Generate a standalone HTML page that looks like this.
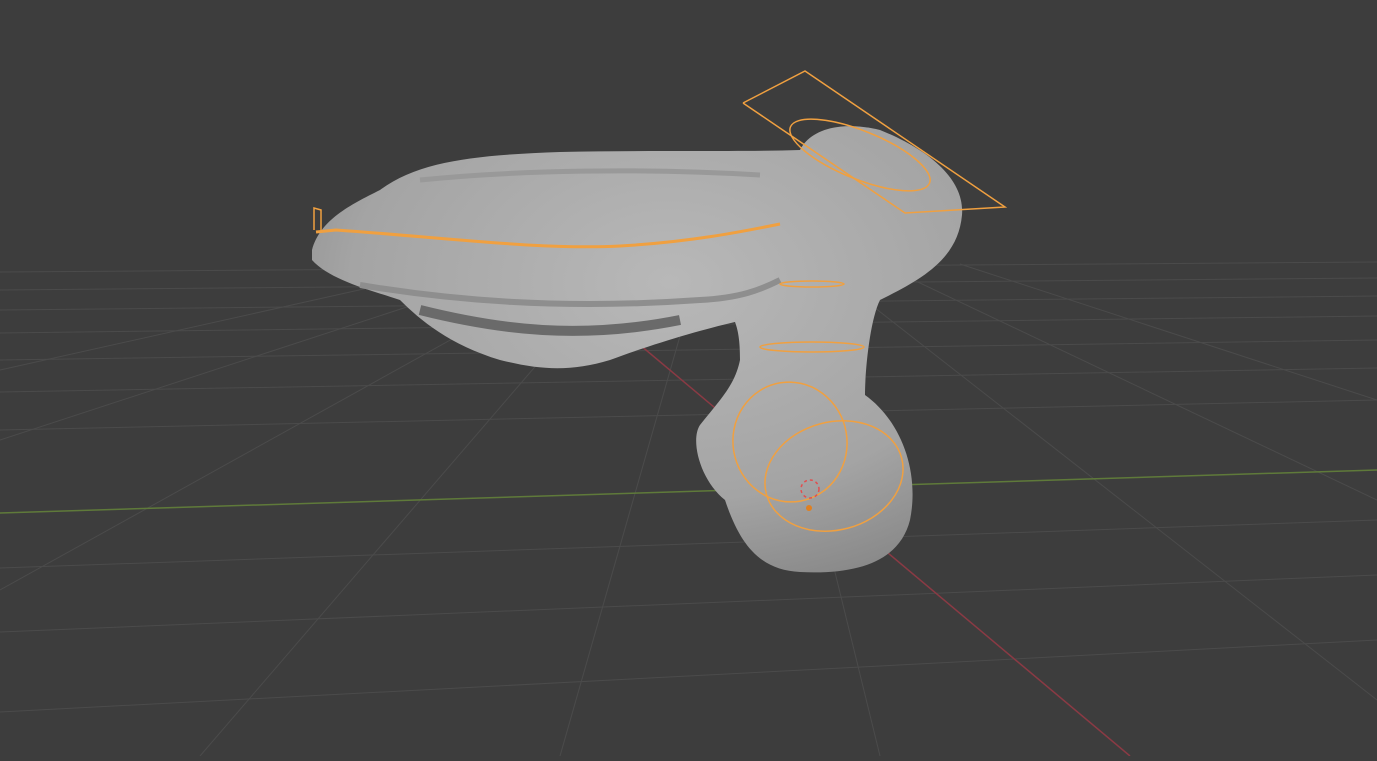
<!DOCTYPE html>
<html><head><style>html,body{margin:0;padding:0;background:#3d3d3d;overflow:hidden}</style></head>
<body>
<svg width="1377" height="756" viewBox="0 0 1377 756" xmlns="http://www.w3.org/2000/svg">
<defs>
<radialGradient id="g" cx="0.55" cy="0.35" r="0.7">
<stop offset="0" stop-color="#b8b8b8"/><stop offset="0.7" stop-color="#a4a4a4"/><stop offset="1" stop-color="#8a8a8a"/>
</radialGradient>
</defs>
<rect width="1377" height="756" fill="#3d3d3d"/>
<g stroke="#4b4b4b" stroke-width="1" fill="none">
<line x1="0" y1="272" x2="1377" y2="262"/>
<line x1="0" y1="290" x2="1377" y2="278"/>
<line x1="0" y1="310" x2="1377" y2="296"/>
<line x1="0" y1="333" x2="1377" y2="316"/>
<line x1="0" y1="360" x2="1377" y2="340"/>
<line x1="0" y1="392" x2="1377" y2="368"/>
<line x1="0" y1="430" x2="1377" y2="400"/>
<line x1="0" y1="568" x2="1377" y2="520"/>
<line x1="0" y1="632" x2="1377" y2="575"/>
<line x1="0" y1="712" x2="1377" y2="640"/>
<line x1="520" y1="270" x2="0" y2="440"/>
<line x1="580" y1="268" x2="0" y2="590"/>
<line x1="620" y1="268" x2="200" y2="756"/>
<line x1="700" y1="266" x2="560" y2="756"/>
<line x1="760" y1="266" x2="880" y2="756"/>
<line x1="820" y1="265" x2="1377" y2="700"/>
<line x1="880" y1="264" x2="1377" y2="500"/>
<line x1="960" y1="264" x2="1377" y2="400"/>
<line x1="440" y1="272" x2="0" y2="370"/>
</g>
<line x1="0" y1="513" x2="1377" y2="470" stroke="#5f7a3a" stroke-width="1.5"/>
<line x1="640" y1="345" x2="1130" y2="756" stroke="#8a3a44" stroke-width="1.5"/>
<path d="M312,250 C320,220 350,205 380,190 C420,160 480,155 560,152 C650,150 740,152 800,150 C810,130 840,120 880,130 C930,150 965,180 962,215 C958,260 920,280 880,300 C870,320 865,370 865,395 C900,420 920,470 910,520 C900,560 860,575 800,572 C760,570 740,545 725,500 C700,480 690,440 700,425 C720,400 735,385 740,360 C740,340 738,330 735,322 C700,330 650,345 610,360 C570,372 540,370 500,360 C450,345 420,320 400,300 C370,290 330,280 312,260 Z" fill="url(#g)"/>
<path d="M360,285 C450,300 560,310 700,300 C740,298 760,290 780,280" stroke="#8e8e8e" stroke-width="6" fill="none"/>
<path d="M420,310 C500,330 580,340 680,320" stroke="#6a6a6a" stroke-width="10" fill="none"/>
<path d="M420,180 C520,170 640,168 760,175" stroke="#999" stroke-width="5" fill="none"/>
<g stroke="#f0a040" stroke-width="1.5" fill="none">
<polyline points="743,103 805,71 1005,207 905,213 743,103"/>
<ellipse cx="860" cy="155" rx="75" ry="24" transform="rotate(22 860 155)"/>
<path d="M314,230 L314,208 L321,210 L321,230"/>
<path d="M316,232 L336,230 C450,238 540,250 620,246 C690,242 740,232 780,224" stroke-width="3"/>
<ellipse cx="812" cy="284" rx="32" ry="3"/>
<ellipse cx="812" cy="347" rx="52" ry="5"/>
<ellipse cx="790" cy="442" rx="57" ry="60" transform="rotate(-10 790 442)"/>
<ellipse cx="834" cy="476" rx="70" ry="54" transform="rotate(-15 834 476)"/>
</g>
<circle cx="810" cy="489" r="9" fill="none" stroke="#e05050" stroke-width="1.5" stroke-dasharray="3 3"/>
<circle cx="809" cy="508" r="3" fill="#e08020"/>
</svg>
</body></html>
